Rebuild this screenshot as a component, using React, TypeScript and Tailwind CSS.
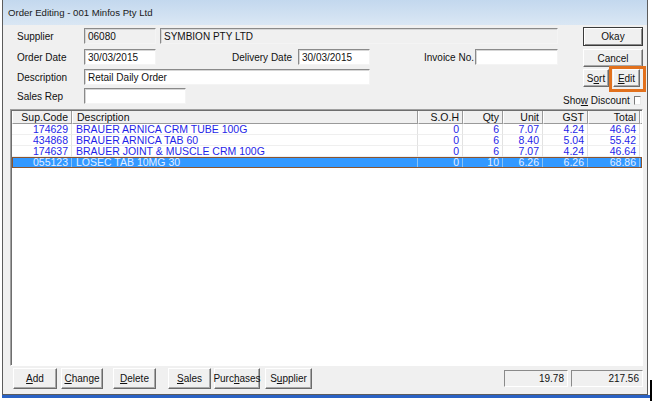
import React from 'react'

interface Row {
  code: string
  desc: string
  soh: string
  qty: string
  unit: string
  gst: string
  total: string
  selected?: boolean
}

const rows: Row[] = [
  { code: '174629', desc: 'BRAUER ARNICA CRM TUBE 100G', soh: '0', qty: '6', unit: '7.07', gst: '4.24', total: '46.64' },
  { code: '434868', desc: 'BRAUER ARNICA TAB 60', soh: '0', qty: '6', unit: '8.40', gst: '5.04', total: '55.42' },
  { code: '174637', desc: 'BRAUER JOINT & MUSCLE CRM 100G', soh: '0', qty: '6', unit: '7.07', gst: '4.24', total: '46.64' },
  { code: '055123', desc: 'LOSEC TAB 10MG 30', soh: '0', qty: '10', unit: '6.26', gst: '6.26', total: '68.86', selected: true },
]

// column widths in px, matching the listview header
const cols = [
  { label: 'Sup.Code', w: 'w-[60px]', align: 'text-right pr-[3px]' },
  { label: 'Description', w: 'w-[346px]', align: 'text-left pl-[4px]' },
  { label: 'S.O.H', w: 'w-[45px]', align: 'text-right pr-[3px]' },
  { label: 'Qty', w: 'w-[40px]', align: 'text-right pr-[3px]' },
  { label: 'Unit', w: 'w-[40px]', align: 'text-right pr-[3px]' },
  { label: 'GST', w: 'w-[45px]', align: 'text-right pr-[3px]' },
  { label: 'Total', w: 'w-[52px]', align: 'text-right pr-[3px]' },
]

function Field({ className, gray, children }: { className?: string; gray?: boolean; children?: React.ReactNode }) {
  return (
    <div
      className={`h-[16px] flex items-center pl-[3px] border border-t-[#8a8a8a] border-l-[#8a8a8a] border-r-[#f4f4f4] border-b-[#f4f4f4] shadow-[inset_1px_1px_0_#d6d6d6] whitespace-nowrap overflow-hidden ${gray ? 'bg-[#f0f0f0]' : 'bg-white'} ${className ?? ''}`}
    >
      {children}
    </div>
  )
}

function Btn({ className, def, children }: { className?: string; def?: boolean; children: React.ReactNode }) {
  return (
    <div
      className={`flex items-center justify-center bg-[#f0f0f0] border ${
        def ? 'border-[#3a3a3a] shadow-[inset_1px_1px_0_#fff,inset_-1px_-1px_0_#8a8a8a]' : 'border-t-white border-l-white border-r-[#6b6b6b] border-b-[#6b6b6b] shadow-[inset_-1px_-1px_0_#a8a8a8]'
      } whitespace-nowrap ${className ?? ''}`}
    >
      {children}
    </div>
  )
}

function Label({ className, children }: { className?: string; children: React.ReactNode }) {
  return <div className={`shrink-0 whitespace-nowrap ${className ?? ''}`}>{children}</div>
}

export default function App() {
  return (
    <div className="w-[652px] h-[401px] bg-white relative overflow-hidden font-['Liberation_Sans_Narrow','Liberation_Sans',Arial,sans-serif] text-[10px] text-[#111]">
      <div className="ml-[2px] w-[646px] h-[395px] border-l border-r border-b border-[#5c5c5c] flex flex-col">
        {/* title bar */}
        <div className="h-[25px] shrink-0 bg-gradient-to-b from-[#c3d8ee] to-[#dae7f4] flex items-center pl-[5px] pt-[1px] font-['Liberation_Sans',Arial,sans-serif] text-[9.6px] text-[#1a1a1a]">
          Order Editing - 001 Minfos Pty Ltd
        </div>

        <div className="flex-1 bg-[#f0f0f0] flex flex-col">
          {/* header form */}
          <div className="h-[84px] flex pt-[2px]">
            <div className="w-[555px] pt-[1px] pl-[14px] flex flex-col">
              <div className="flex items-center">
                <Label className="w-[67px]">Supplier</Label>
                <Field gray className="w-[72px]">06080</Field>
                <Field gray className="w-[398px] ml-[4px]">SYMBION PTY LTD</Field>
              </div>
              <div className="flex items-center mt-[5px]">
                <Label className="w-[67px]">Order Date</Label>
                <Field className="w-[72px]">30/03/2015</Field>
                <Label className="w-[66px] ml-[76px]">Delivery Date</Label>
                <Field className="w-[72px]">30/03/2015</Field>
                <Label className="w-[51px] ml-[54px]">Invoice No.</Label>
                <Field className="w-[83px]" />
              </div>
              <div className="flex items-center mt-[4px]">
                <Label className="w-[67px]">Description</Label>
                <Field className="w-[286px]">Retail Daily Order</Field>
              </div>
              <div className="flex items-center mt-[3px]">
                <Label className="w-[67px]">Sales Rep</Label>
                <Field className="w-[102px]" />
              </div>
            </div>

            <div className="ml-[25px] w-[60px] flex flex-col">
              <Btn def className="h-[19px]">Okay</Btn>
              <Btn className="h-[18px] mt-[3px]">Cancel</Btn>
              <div className="flex mt-[2px] h-[18px]">
                <Btn className="w-[26px]">
                  S<u>o</u>rt
                </Btn>
                <div className="relative ml-[4px] w-[27px]">
                  <Btn className="w-[27px] h-[18px]">
                    <u>E</u>dit
                  </Btn>
                  {/* highlight annotation */}
                  <div className="absolute left-[-4px] top-[-3px] w-[37px] h-[26px] border-[3px] border-[#e2711d]" />
                </div>
              </div>
              <div className="flex items-center justify-end gap-[4px] -ml-[20px] pr-[2px] mt-[8px] h-[10px]">
                <span className="whitespace-nowrap">
                  Sho<u>w</u> Discount
                </span>
                <div className="w-[9px] h-[9px] bg-white border border-t-[#7a7a7a] border-l-[#7a7a7a] border-r-[#e8e8e8] border-b-[#e8e8e8]" />
              </div>
            </div>
          </div>

          {/* line list */}
          <div className="ml-[7px] w-[633px] h-[257px] bg-white border border-t-[#a0a0a0] border-l-[#a0a0a0] border-r-white border-b-white shadow-[inset_1px_1px_0_#6e6e6e] pl-[1px] pt-[1px] flex flex-col text-[10.5px]">
            <div className="flex h-[13px] shrink-0 bg-[#f0f0f0]">
              {cols.map((c) => (
                <div
                  key={c.label}
                  className={`${c.w} ${c.align} shrink-0 border-r border-b border-r-[#9a9a9a] border-b-[#9a9a9a] border-l border-l-white leading-[12px] whitespace-nowrap`}
                >
                  {c.label}
                </div>
              ))}
              <div className="flex-1 border-b border-b-[#9a9a9a] border-l border-l-white" />
            </div>

            {rows.map((r) => {
              const vals = [r.code, r.desc, r.soh, r.qty, r.unit, r.gst, r.total]
              return (
                <div
                  key={r.code}
                  className={`flex h-[11px] shrink-0 ${
                    r.selected ? 'bg-[#3399ff] text-[#e4efff] outline outline-1 outline-[#8a5530] -outline-offset-1' : 'text-[#1f1fe8]'
                  }`}
                >
                  {vals.map((v, i) => (
                    <div
                      key={i}
                      className={`${cols[i].w} ${cols[i].align} shrink-0 border-r border-b ${
                        r.selected ? 'border-r-[#8cc4f5] border-b-transparent' : 'border-r-[#e2e2e2] border-b-[#efefef]'
                      } leading-[10px] whitespace-nowrap overflow-hidden`}
                    >
                      {v}
                    </div>
                  ))}
                </div>
              )
            })}
          </div>

          {/* bottom buttons */}
          <div className="flex items-start mt-[2px]">
            <Btn className="ml-[10px] w-[44px] h-[21px]">
              <u>A</u>dd
            </Btn>
            <Btn className="ml-[4px] w-[42px] h-[21px]">
              <u>C</u>hange
            </Btn>
            <Btn className="ml-[10px] w-[43px] h-[21px]">
              <u>D</u>elete
            </Btn>
            <Btn className="ml-[12px] w-[43px] h-[21px]">
              <u>S</u>ales
            </Btn>
            <Btn className="ml-[3px] w-[46px] h-[21px]">
              Purc<u>h</u>ases
            </Btn>
            <Btn className="ml-[5px] w-[47px] h-[21px]">
              S<u>u</u>pplier
            </Btn>
            <div className="ml-auto mt-[2px] flex gap-[3px] mr-[4px]">
              <div className="w-[64px] h-[17px] flex items-center justify-end pr-[3px] border border-t-[#8a8a8a] border-l-[#8a8a8a] border-r-white border-b-white">
                19.78
              </div>
              <div className="w-[72px] h-[17px] flex items-center justify-end pr-[3px] border border-t-[#8a8a8a] border-l-[#8a8a8a] border-r-white border-b-white">
                217.56
              </div>
            </div>
          </div>
        </div>
      </div>
      <div className="ml-[2px] w-[649px] h-[3px] bg-[#2a62c4]" />
      <div className="absolute left-[650px] top-[380px] w-[2px] h-[21px] bg-black" />
    </div>
  )
}
